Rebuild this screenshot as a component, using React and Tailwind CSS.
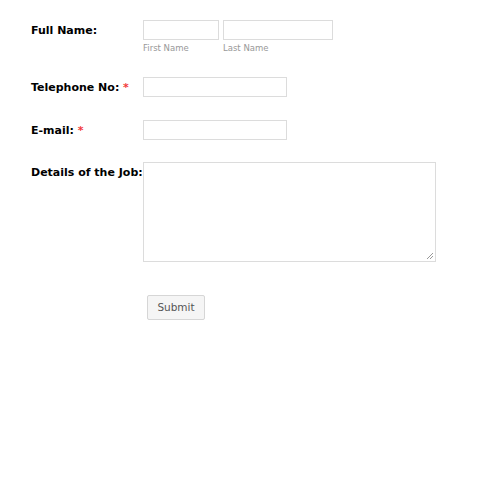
export default function App() {
  const font = { fontFamily: '"DejaVu Sans", Verdana, sans-serif' };
  const labelCls = "w-[112px] shrink-0 text-[11px] font-bold leading-[20px] text-black translate-y-[1px]";
  const inputCls = "h-[20px] border border-[#dcdcdc] bg-white";
  return (
    <div className="w-[500px] h-[484px] bg-white" style={font}>
      <div className="pl-[31px] pt-[20px] flex flex-col">
        <div className="flex items-start">
          <div className={labelCls}>Full Name:</div>
          <div className="flex gap-[4px]">
            <div className="flex flex-col">
              <div className={`${inputCls} w-[76px]`}></div>
              <div className="text-[8.5px] leading-[12px] text-[#999] mt-[1px] translate-y-[1px]">First Name</div>
            </div>
            <div className="flex flex-col">
              <div className={`${inputCls} w-[110px]`}></div>
              <div className="text-[8.5px] leading-[12px] text-[#999] mt-[1px] translate-y-[1px]">Last Name</div>
            </div>
          </div>
        </div>
        <div className="flex items-start mt-[24px]">
          <div className={labelCls}>
            Telephone No: <span className="text-[#f23a3c]">*</span>
          </div>
          <div className={`${inputCls} w-[144px]`}></div>
        </div>
        <div className="flex items-start mt-[23px]">
          <div className={labelCls}>
            E-mail: <span className="text-[#f23a3c]">*</span>
          </div>
          <div className={`${inputCls} w-[144px]`}></div>
        </div>
        <div className="flex items-start mt-[22px]">
          <div className={labelCls}>Details of the Job:</div>
          <div className="relative w-[293px] h-[100px] border border-[#dcdcdc] bg-white">
            <svg className="absolute right-[1px] bottom-[1px]" width="8" height="8" viewBox="0 0 8 8">
              <line x1="7" y1="1" x2="1" y2="7" stroke="#999" strokeWidth="1" />
              <line x1="7" y1="4" x2="4" y2="7" stroke="#999" strokeWidth="1" />
            </svg>
          </div>
        </div>
        <div className="flex mt-[33px] pl-[116px]">
          <div className="w-[58px] h-[25px] flex items-center justify-center border border-[#d6d6d6] rounded-[2px] bg-[#f5f5f5] text-[10.5px] text-[#555]">
            Submit
          </div>
        </div>
      </div>
    </div>
  );
}
